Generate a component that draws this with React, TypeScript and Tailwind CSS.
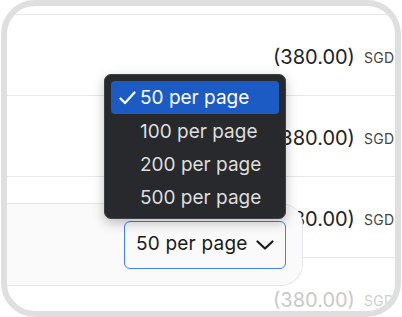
import React from "react";

const rows = [false, false, false, true];

export default function App() {
  return (
    <div className="w-[402px] h-[317px] bg-white">
      <div className="relative ml-[1px] w-[400px] h-[317px] border-[6px] border-[#dfdfdf] rounded-[34px] overflow-hidden bg-white">
        <div className="h-[9px] border-b border-[#e6e7eb]" />
        {rows.map((faded, i) => (
          <div
            key={i}
            className="h-[81px] border-b border-[#e6e7eb] flex items-center pt-[4px] pl-[266px] gap-[9px] whitespace-nowrap"
            style={{ fontFamily: "Inter, sans-serif" }}
          >
            <span className={`text-[20px] ${faded ? "text-[#c9c9c9]" : "text-[#222222]"}`}>(380.00)</span>
            <span className={`text-[14px] tracking-[0.3px] ${faded ? "text-[#cfcfcf]" : "text-[#444444]"}`}>SGD</span>
          </div>
        ))}

        {/* floating card with select */}
        <div className="absolute left-[-20px] top-[197px] w-[316px] h-[83px] bg-[#fafafa] border border-[#e5e6ea] rounded-[22px] flex items-center justify-end pr-[16px]">
          <div className="w-[162px] h-[48px] border-[1.5px] border-[#3b82f6] rounded-[6px] bg-[#fafafa] flex items-center pl-[11px] pr-[10px] justify-between">
            <span className="text-[19px] text-[#1a1a1a] tracking-[0.2px]" style={{ fontFamily: "Inter, sans-serif" }}>50 per page</span>
            <svg width="20" height="12" viewBox="0 0 20 12" fill="none">
              <path d="M2.5 2.5 L10 9.5 L17.5 2.5" stroke="#1a1a1a" strokeWidth="2.2" strokeLinecap="round" strokeLinejoin="round" />
            </svg>
          </div>
        </div>

        {/* dropdown menu */}
        <div
          className="absolute left-[97px] top-[68px] w-[182px] h-[145px] bg-[#27292d] border border-[#3f4146] rounded-[7px] shadow-[0_4px_12px_rgba(0,0,0,0.25)] pt-[6px] px-[6px]"
          style={{ fontFamily: "Inter, sans-serif" }}
        >
          <div className="h-[33px] rounded-[4px] bg-[#1c5ac4] flex items-center pt-[1px] pl-[8px] text-white text-[19px]">
            <svg width="17" height="14" viewBox="0 0 17 14" fill="none" className="mr-[4px]">
              <path d="M1.5 7.5 L6 12 L15.5 1.5" stroke="#ffffff" strokeWidth="2.3" strokeLinecap="round" strokeLinejoin="round" />
            </svg>
            <span>50 per page</span>
          </div>
          {["100 per page", "200 per page", "500 per page"].map((t) => (
            <div key={t} className="h-[33px] flex items-center pt-[3px] pl-[29px] text-[#dedede] text-[19px]">
              {t}
            </div>
          ))}
        </div>
      </div>
    </div>
  );
}
